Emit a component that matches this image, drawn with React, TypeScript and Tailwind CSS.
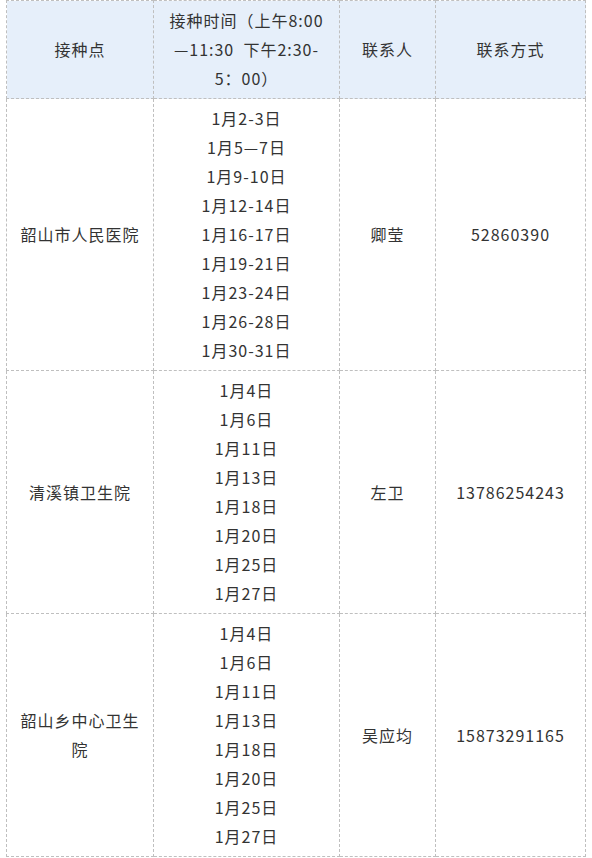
const rows = [
  {
    site: "韶山市人民医院",
    dates: [
      "1月2-3日",
      "1月5—7日",
      "1月9-10日",
      "1月12-14日",
      "1月16-17日",
      "1月19-21日",
      "1月23-24日",
      "1月26-28日",
      "1月30-31日",
    ],
    contact: "卿莹",
    phone: "52860390",
  },
  {
    site: "清溪镇卫生院",
    dates: ["1月4日", "1月6日", "1月11日", "1月13日", "1月18日", "1月20日", "1月25日", "1月27日"],
    contact: "左卫",
    phone: "13786254243",
  },
  {
    site: "韶山乡中心卫生院",
    dates: ["1月4日", "1月6日", "1月11日", "1月13日", "1月18日", "1月20日", "1月25日", "1月27日"],
    contact: "吴应均",
    phone: "15873291165",
  },
];

const cell =
  "border border-dashed border-[#bfbfbf] px-[8px] py-[5px] text-center align-middle";

export default function App() {
  return (
    <div
      className="bg-white px-[6px] text-[16px] leading-[29px] tracking-[1px] text-[#333]"
      style={{ fontFamily: '"Noto Sans CJK SC", "Noto Sans", sans-serif' }}
    >
      <table className="w-[579px] table-fixed border-collapse">
        <colgroup>
          <col className="w-[147px]" />
          <col className="w-[186px]" />
          <col className="w-[96px]" />
          <col className="w-[150px]" />
        </colgroup>
        <thead>
          <tr className="bg-[#e6effa]">
            <th className={`${cell} font-normal`}>接种点</th>
            <th className={`${cell} font-normal`}>
              接种时间（上午8:00
              <br />
              —11:30&nbsp; 下午2:30-
              <br />
              5：00）
            </th>
            <th className={`${cell} font-normal`}>联系人</th>
            <th className={`${cell} font-normal`}>联系方式</th>
          </tr>
        </thead>
        <tbody>
          {rows.map((r) => (
            <tr key={r.site}>
              <td className={cell}>{r.site}</td>
              <td className={cell}>
                {r.dates.map((d, i) => (
                  <div key={i}>{d}</div>
                ))}
              </td>
              <td className={cell}>{r.contact}</td>
              <td className={cell}>{r.phone}</td>
            </tr>
          ))}
        </tbody>
      </table>
    </div>
  );
}
